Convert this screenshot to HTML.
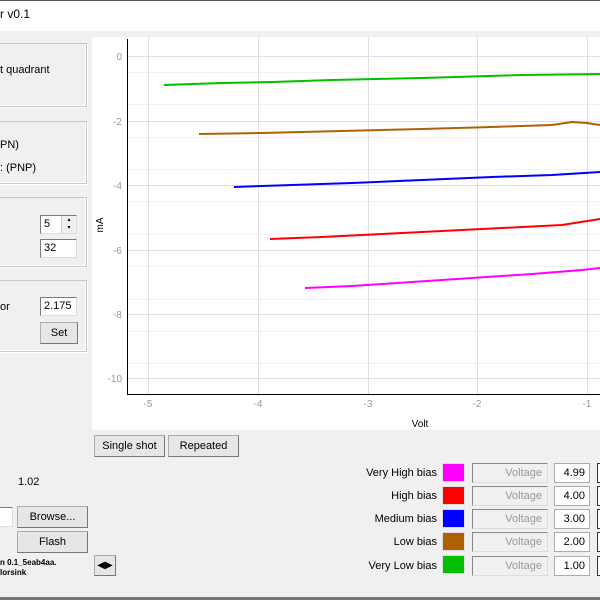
<!DOCTYPE html>
<html><head><style>
*{margin:0;padding:0;box-sizing:border-box}
body{width:600px;height:600px;overflow:hidden;background:#f0f0f0;font-family:"Liberation Sans",sans-serif;font-size:11px;color:#000;position:relative}
.a{position:absolute}
.grp{position:absolute;border:1px solid #c8c8c8;box-shadow:inset -1px -1px 0 #fff,1px 1px 0 #fff}
.btn{position:absolute;background:#e6e6e6;border:1px solid #adadad;border-right-color:#777;border-bottom-color:#777;text-align:center;font-size:11px}
.inp{position:absolute;background:#fff;border:1px solid #7a7a7a;border-right-color:#ddd;border-bottom-color:#ddd;font-size:11px}
.lbl{position:absolute;text-align:right;width:120px;font-size:11px}
.sw{position:absolute;width:23px;height:19px;border:1px solid #ddd}
.vf{position:absolute;width:76px;height:20px;border:1px solid #888;border-right-color:#ddd;border-bottom-color:#ddd;color:#999;text-align:right;padding-right:5px;line-height:18px;background:#f0f0f0}
.nv{position:absolute;width:36px;height:20px;background:#fff;border:1px solid #aaa;text-align:right;padding-right:4px;line-height:18px}
</style></head><body>
<div class="a" style="left:0;top:0;width:600px;height:31px;background:#fff;border-top:1px solid #555"></div>
<div class="a" style="left:0;top:7px;font-size:12px">r v0.1</div>

<div class="grp" style="left:-5px;top:43px;width:92px;height:64px"></div>
<div class="a" style="left:0;top:64px">t quadrant</div>
<div class="grp" style="left:-5px;top:121px;width:92px;height:63px"></div>
<div class="a" style="left:0;top:139px">PN)</div>
<div class="a" style="left:0;top:162px">: (PNP)</div>
<div class="grp" style="left:-5px;top:197px;width:92px;height:70px"></div>
<div class="inp" style="left:40px;top:215px;width:37px;height:19px;padding:2px 3px">5</div>
<div class="a" style="left:61px;top:216px;width:15px;height:17px;border-left:1px solid #ccc;font-size:6px;line-height:8px;text-align:center;background:#f0f0f0">▴<br>▾</div>
<div class="inp" style="left:40px;top:239px;width:37px;height:19px;padding:2px 3px">32</div>
<div class="grp" style="left:-5px;top:280px;width:92px;height:72px"></div>
<div class="a" style="left:0;top:301px">or</div>
<div class="inp" style="left:40px;top:297px;width:37px;height:19px;padding:2px 3px">2.175</div>
<div class="btn" style="left:40px;top:322px;width:38px;height:22px;line-height:20px">Set</div>

<svg class="a" style="left:92px;top:37px" width="508" height="393">
<rect width="508" height="393" fill="#fff"/>
<g stroke="#f2f2f2" stroke-width="1">
<line x1="36" x2="508" y1="35.5" y2="35.5"/><line x1="36" x2="508" y1="67.5" y2="67.5"/><line x1="36" x2="508" y1="100.5" y2="100.5"/><line x1="36" x2="508" y1="132.5" y2="132.5"/><line x1="36" x2="508" y1="164.5" y2="164.5"/><line x1="36" x2="508" y1="197.5" y2="197.5"/><line x1="36" x2="508" y1="229.5" y2="229.5"/><line x1="36" x2="508" y1="262.5" y2="262.5"/><line x1="36" x2="508" y1="294.5" y2="294.5"/><line x1="36" x2="508" y1="326.5" y2="326.5"/>
</g>
<g stroke="#e0e0e0" stroke-width="1">
<line x1="36" x2="508" y1="19.5" y2="19.5"/><line x1="36" x2="508" y1="84.5" y2="84.5"/><line x1="36" x2="508" y1="148.5" y2="148.5"/><line x1="36" x2="508" y1="213.5" y2="213.5"/><line x1="36" x2="508" y1="277.5" y2="277.5"/><line x1="36" x2="508" y1="341.5" y2="341.5"/>
<line x1="56.5" x2="56.5" y1="0" y2="357"/><line x1="166.5" x2="166.5" y1="0" y2="357"/><line x1="276.5" x2="276.5" y1="0" y2="357"/><line x1="385.5" x2="385.5" y1="0" y2="357"/><line x1="495.5" x2="495.5" y1="0" y2="357"/>
</g>
<line x1="35.5" x2="35.5" y1="2" y2="357" stroke="#000"/>
<line x1="35" x2="508" y1="357.5" y2="357.5" stroke="#000"/>
<g fill="none" stroke-width="2">
<polyline stroke="#00c000" points="72,48 130,46 180,45 240,43 330,41 430,38 508,37"/>
<polyline stroke="#b06000" points="107,97 170,96 250,94 330,92 400,90 460,88 480,85 495,86 508,88"/>
<polyline stroke="#0000ff" points="142,150 200,148 260,146 330,143 400,140 460,138 508,135"/>
<polyline stroke="#ff0000" points="178,202 230,200 290,197 350,194 410,191 470,188 508,182"/>
<polyline stroke="#ff00ff" points="213,251 260,249 320,245 380,241 440,237 490,233 508,231"/>
</g>
<g fill="#999" font-size="10" font-family="Liberation Sans" text-anchor="end">
<text x="30" y="23">0</text><text x="30" y="88">-2</text><text x="30" y="152">-4</text><text x="30" y="217">-6</text><text x="30" y="281">-8</text><text x="30" y="345">-10</text>
</g>
<g fill="#999" font-size="10" font-family="Liberation Sans" text-anchor="middle">
<text x="56" y="370">-5</text><text x="166" y="370">-4</text><text x="276" y="370">-3</text><text x="385" y="370">-2</text><text x="495" y="370">-1</text>
</g>
<text x="328" y="390" font-size="10" font-family="Liberation Sans" text-anchor="middle">Volt</text>
<text transform="translate(11,188) rotate(-90)" font-size="10" font-family="Liberation Sans" text-anchor="middle">mA</text>
</svg>

<div class="btn" style="left:94px;top:435px;width:71px;height:22px;line-height:20px">Single shot</div>
<div class="btn" style="left:168px;top:435px;width:71px;height:22px;line-height:20px">Repeated</div>
<div class="a" style="left:18px;top:476px">1.02</div>
<div class="inp" style="left:-2px;top:507px;width:15px;height:20px"></div>
<div class="btn" style="left:17px;top:506px;width:71px;height:22px;line-height:20px">Browse...</div>
<div class="btn" style="left:17px;top:531px;width:71px;height:22px;line-height:20px">Flash</div>
<div class="a" style="left:0;top:558px;font-size:8px;font-weight:bold;line-height:10px">n 0.1_5eab4aa.<br>lorsink</div>
<div class="btn" style="left:94px;top:555px;width:22px;height:21px;line-height:19px;font-size:10px">◀▶</div>

<div class="lbl" style="left:317px;top:467px">Very High bias</div>
<div class="lbl" style="left:317px;top:490px">High bias</div>
<div class="lbl" style="left:317px;top:513px">Medium bias</div>
<div class="lbl" style="left:317px;top:536px">Low bias</div>
<div class="lbl" style="left:317px;top:560px">Very Low bias</div>
<div class="sw" style="left:442px;top:463px;background:#ff00ff"></div>
<div class="sw" style="left:442px;top:486px;background:#ff0000"></div>
<div class="sw" style="left:442px;top:509px;background:#0000ff"></div>
<div class="sw" style="left:442px;top:532px;background:#b06000"></div>
<div class="sw" style="left:442px;top:555px;background:#00c000"></div>
<div class="vf" style="left:472px;top:463px">Voltage</div>
<div class="vf" style="left:472px;top:486px">Voltage</div>
<div class="vf" style="left:472px;top:509px">Voltage</div>
<div class="vf" style="left:472px;top:532px">Voltage</div>
<div class="vf" style="left:472px;top:556px">Voltage</div>
<div class="nv" style="left:554px;top:463px">4.99</div>
<div class="nv" style="left:554px;top:486px">4.00</div>
<div class="nv" style="left:554px;top:509px">3.00</div>
<div class="nv" style="left:554px;top:532px">2.00</div>
<div class="nv" style="left:554px;top:556px">1.00</div>
<div class="a" style="left:597px;top:463px;width:5px;height:20px;border:1px solid #333;background:#fff"></div>
<div class="a" style="left:597px;top:486px;width:5px;height:20px;border:1px solid #333;background:#fff"></div>
<div class="a" style="left:597px;top:509px;width:5px;height:20px;border:1px solid #333;background:#fff"></div>
<div class="a" style="left:597px;top:532px;width:5px;height:20px;border:1px solid #333;background:#fff"></div>
<div class="a" style="left:597px;top:556px;width:5px;height:20px;border:1px solid #333;background:#fff"></div>
<div class="a" style="left:0;top:597px;width:600px;height:3px;background:#777"></div>
</body></html>
